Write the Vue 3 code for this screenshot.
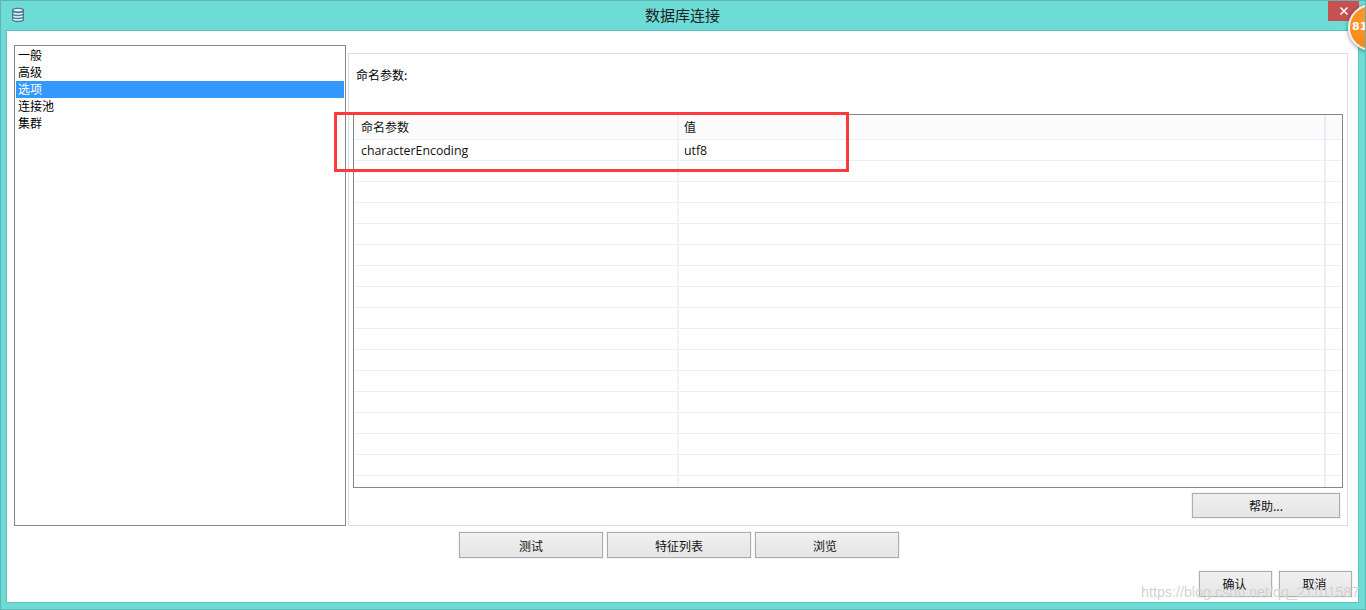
<script setup>
const navItems = ['一般', '高级', '选项', '连接池', '集群']
const emptyRows = Array.from({ length: 16 }, (_, i) => i)
</script>

<template>
  <div class="window">
    <header class="titlebar">
      <svg class="db-icon" width="14" height="16" viewBox="0 0 14 16">
        <path d="M1 3.2C1 1.6 3.6 .8 7 .8s6 .8 6 2.4v9.6c0 1.6-2.6 2.4-6 2.4s-6-.8-6-2.4z" fill="#4b7d93" />
        <ellipse cx="7" cy="3.2" rx="4.2" ry="1.1" fill="#eaf6f7" />
        <path d="M2.4 6.2c2 1.1 7.2 1.1 9.2 0M2.4 9.2c2 1.1 7.2 1.1 9.2 0M2.4 12.2c2 1.1 7.2 1.1 9.2 0" fill="none" stroke="#eaf6f7" stroke-width="1.4" />
      </svg>
      <span class="title">数据库连接</span>
      <button class="close">
        <svg width="10" height="10" viewBox="0 0 10 10"><path d="M1.5 1.5l7 7M8.5 1.5l-7 7" stroke="#fff" stroke-width="1.6" /></svg>
      </button>
    </header>

    <main class="client">
      <div class="body">
        <ul class="nav">
          <li v-for="(item, i) in navItems" :key="item" :class="{ active: i === 2 }">{{ item }}</li>
        </ul>
        <section class="panel">
          <div class="label">命名参数:</div>
          <div class="table">
            <div class="row head">
              <div class="cell first">命名参数</div>
              <div class="cell second">值</div>
              <div class="cell tail"></div>
            </div>
            <div class="row">
              <div class="cell first">characterEncoding</div>
              <div class="cell second">utf8</div>
              <div class="cell tail"></div>
            </div>
            <div v-for="r in emptyRows" :key="r" class="row">
              <div class="cell first"></div>
              <div class="cell second"></div>
              <div class="cell tail"></div>
            </div>
          </div>
          <div class="help-row"><button class="btn help">帮助...</button></div>
        </section>
      </div>

      <div class="mid-actions">
        <button class="btn wide">测试</button>
        <button class="btn wide">特征列表</button>
        <button class="btn wide browse">浏览</button>
      </div>

      <div class="bottom-actions">
        <button class="btn small">确认</button>
        <button class="btn small">取消</button>
      </div>
    </main>

    <div class="highlight"></div>
    <div class="badge">81</div>
    <div class="watermark">https://blog.csdn.net/qq_21101587</div>
  </div>
</template>

<style scoped>
.window {
  position: relative;
  width: 1366px;
  height: 610px;
  overflow: hidden;
  box-sizing: border-box;
  display: flex;
  flex-direction: column;
  background: #6ddcd6;
  border: 1px solid #5fb5b2;
  font-family: "Noto Sans CJK SC", "Open Sans", sans-serif;
  font-size: 12px;
  color: #000;
}
.titlebar {
  position: relative;
  height: 30px;
  flex: none;
  display: flex;
  align-items: center;
  justify-content: center;
}
.db-icon { position: absolute; left: 10px; top: 6px; }
.title { font-size: 15px; line-height: 28px; margin: 0 0 2px -1px; color: #222; }
.close {
  position: absolute;
  right: 6px;
  top: 0;
  width: 31px;
  height: 20px;
  padding: 0;
  border: 0;
  background: #c75050;
  display: flex;
  align-items: center;
  justify-content: center;
}
.client {
  flex: 1;
  margin: 0 7px 7px 6px;
  background: #fff;
  box-shadow: 0 0 0 1px #5fc4bf;
  display: flex;
  flex-direction: column;
  padding: 14px 6px 0 7px;
  min-height: 0;
}
.body { display: flex; gap: 2px; align-items: flex-start; }
.nav {
  list-style: none;
  margin: 0;
  padding: 1px 1px 0;
  box-sizing: border-box;
  width: 332px;
  height: 481px;
  border: 1px solid #828790;
}
.nav li { height: 17px; line-height: 15px; padding-left: 2px; color: #000; white-space: nowrap; }
.nav li.active { background: #3399ff; color: #fff; }
.panel {
  width: 1000px;
  height: 473px;
  margin-top: 8px;
  box-sizing: border-box;
  border: 1px solid #dcdcdc;
  padding: 0 4px 0 4px;
}
.label { height: 60px; padding: 12px 0 0 3px; line-height: 17px; box-sizing: border-box; }
.table {
  width: 990px;
  height: 374px;
  box-sizing: border-box;
  border: 1px solid #828790;
  overflow: hidden;
}
.row { display: flex; height: 21px; box-sizing: border-box; border-bottom: 1px solid #eeeff2; }
.row.head { height: 25px; background: #fbfbfb; border-bottom-color: #edf1f7; }
.cell {
  padding-top: 1px;
  line-height: 19px;
  box-sizing: border-box;
  white-space: nowrap;
  overflow: hidden;
  color: #111;
  font-family: "Open Sans", "Noto Sans CJK SC", sans-serif;
  font-size: 12.35px;
}
.row.head .cell { padding-top: 0; line-height: 25px; font-size: 12px; }
.first { width: 325px; padding-left: 7px; border-right: 2px solid #eef1f7; }
.second { width: 647px; padding-left: 5px; border-right: 2px solid #e8eef8; }
.tail { flex: 1; }
.help-row { display: flex; justify-content: flex-end; padding: 5px 3px 0 0; }
.btn {
  box-sizing: border-box;
  font: inherit;
  color: #111;
  padding: 0;
  border: 1px solid #adadad;
  outline: 1px solid #f2f2f2;
  background: linear-gradient(#f0f0f0, #e5e5e5);
}
.help { width: 148px; height: 25px; }
.mid-actions { display: flex; gap: 4px; padding: 6px 0 0 445px; }
.wide { width: 144px; height: 26px; }
.browse { padding-right: 4px; }
.bottom-actions { display: flex; justify-content: flex-end; gap: 7px; padding: 13px 0 0 0; }
.small { width: 73px; height: 26px; padding: 0 2px 2px 0; }
.highlight {
  position: absolute;
  left: 333px;
  top: 111px;
  width: 515px;
  height: 60px;
  box-sizing: border-box;
  border: 3px solid #fb3b3b;
}
.badge {
  position: absolute;
  left: 1347px;
  top: 3px;
  width: 47px;
  height: 47px;
  box-sizing: border-box;
  border-radius: 50%;
  border: 2px solid #f0f0f0;
  background: radial-gradient(circle at 40% 30%, #ff9a2e, #f77f0e);
  box-shadow: 0 1px 4px rgba(0, 0, 0, .45);
  color: #fff;
  font: bold 11px/41px "DejaVu Sans", sans-serif;
  padding-left: 2px;
}
.watermark {
  position: absolute;
  left: 1140px;
  top: 581px;
  font: 14.3px/20px "Liberation Sans", sans-serif;
  color: rgba(195, 195, 195, .75);
  white-space: nowrap;
  text-shadow: 0 0 1px rgba(255, 255, 255, .6);
}
</style>
